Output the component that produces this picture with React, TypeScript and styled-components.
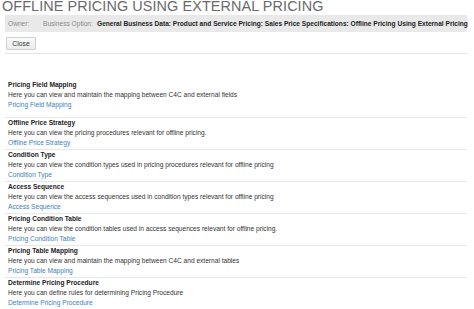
import React from 'react';
import styled, {createGlobalStyle} from "styled-components";

const GlobalStyle = createGlobalStyle`
  html, body {
    margin: 0;
    padding: 0;
    background: #ffffff;
    font-family: "Liberation Sans", Arial, sans-serif;
    overflow: hidden;
  }
`

type Item = {
    title: string
    text: string
}

const items: Item[] = [
    {title: "Pricing Field Mapping", text: "Here you can view and maintain the mapping between C4C and external fields"},
    {title: "Offline Price Strategy", text: "Here you can view the pricing procedures relevant for offline pricing."},
    {title: "Condition Type", text: "Here you can view the condition types used in pricing procedures relevant for offline pricing"},
    {title: "Access Sequence", text: "Here you can view the access sequences used in condition types relevant for offline pricing"},
    {title: "Pricing Condition Table", text: "Here you can view the condition tables used in access sequences relevant for offline pricing."},
    {title: "Pricing Table Mapping", text: "Here you can view and maintain the mapping between C4C and external tables"},
    {title: "Determine Pricing Procedure", text: "Here you can define rules for determining Pricing Procedure"},
]

const Page = styled.div`
  width: 474px;
  height: 309px;
  padding: 0 7px 0 5px;
  box-sizing: border-box;
`
const Title = styled.h1`
  margin: -1px 0 0 -3px;
  font-size: 14.4px;
  line-height: 14px;
  font-weight: normal;
  color: #6a6a6a;
  letter-spacing: 0.1px;
  white-space: nowrap;
`
const InfoBar = styled.div`
  margin-top: 2px;
  height: 17px;
  background: #e9e9e9;
  display: flex;
  align-items: center;
  padding-left: 3px;
  font-size: 6.6px;
  white-space: nowrap;
`
const Label = styled.span<{ $width: number }>`
  color: #8a8a8a;
  width: ${p => p.$width}px;
  flex: none;
`
const Value = styled.span`
  color: #222;
  font-weight: bold;
`
const Toolbar = styled.div`
  padding: 5px 0 3px 1px;
  border-bottom: 1px solid #e4e4e4;
`
const Button = styled.button`
  width: 30px;
  height: 13px;
  padding: 0;
  border: 1px solid #cfcfcf;
  border-radius: 1px;
  background: linear-gradient(#fafafa, #ececec);
  font-family: "Liberation Sans", Arial, sans-serif;
  font-size: 6.8px;
  color: #333;
  display: block;
`
const List = styled.div`
  padding-top: 26px;
`
const Section = styled.div<{ $first?: boolean }>`
  padding: 0 0 ${p => p.$first ? 7 : 1}px 3px;
  border-bottom: 1px solid #e6e6e6;
  font-size: 6.6px;
  line-height: 10px;
  white-space: nowrap;

  &:last-child {
    border-bottom: none;
  }
`
const SectionTitle = styled.div`
  font-weight: bold;
  color: #222;
`
const SectionText = styled.div`
  color: #333;
`
const SectionLink = styled.a`
  display: block;
  color: #3d7fc2;
  text-decoration: none;
  cursor: pointer;
`

export default function App() {
    return (
        <>
            <GlobalStyle/>
            <Page>
                <Title>OFFLINE PRICING USING EXTERNAL PRICING</Title>
                <InfoBar>
                    <Label $width={35}>Owner:</Label>
                    <Label $width={54}>Business Option:</Label>
                    <Value>General Business Data: Product and Service Pricing: Sales Price Specifications: Offline Pricing Using External Pricing</Value>
                </InfoBar>
                <Toolbar>
                    <Button>Close</Button>
                </Toolbar>
                <List>
                    {items.map((item, index) => (
                        <Section key={index} $first={index === 0}>
                            <SectionTitle>{item.title}</SectionTitle>
                            <SectionText>{item.text}</SectionText>
                            <SectionLink>{item.title}</SectionLink>
                        </Section>
                    ))}
                </List>
            </Page>
        </>
    );
}
